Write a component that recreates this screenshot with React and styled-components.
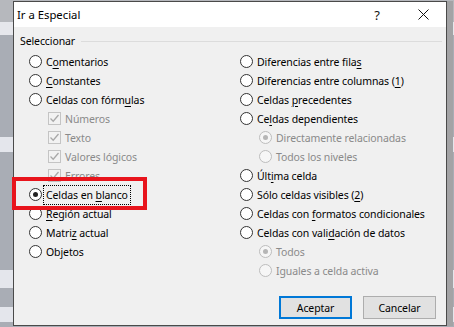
import React from "react";
import styled, { createGlobalStyle } from "styled-components";

const GlobalStyle = createGlobalStyle`
  html, body {
    margin: 0;
    padding: 0;
    width: 454px;
    height: 327px;
    overflow: hidden;
  }
  body {
    font-family: "Noto Sans", "Open Sans", sans-serif;
    background: linear-gradient(
      180deg,
      #b6b8bd 0px,
      #b6b8bd 22px,
      #e6e7ec 22px,
      #e6e7ec 35px,
      #a9adb5 35px,
      #a9adb5 137px,
      #e4e6ec 137px,
      #e4e6ec 152px,
      #a9adb5 152px,
      #a9adb5 270px,
      #e4e6ec 270px,
      #e4e6ec 288px,
      #a9adb5 288px,
      #a9adb5 307px,
      #e4e6ec 307px,
      #e4e6ec 322px,
      #a9adb5 322px
    );
  }
`;

const Screen = styled.div`
  position: relative;
  width: 454px;
  height: 327px;
  padding: 1px 0 0 13px;
  box-sizing: border-box;
`;

const Dialog = styled.div`
  width: 434px;
  height: 325px;
  box-sizing: border-box;
  border: 1px solid #4a4a4a;
  background: #f0f0f0;
  display: flex;
  flex-direction: column;
  box-shadow: 6px 0 0 #a3a3a5;
`;

const TitleBar = styled.div`
  height: 25px;
  background: #fff;
  display: flex;
  align-items: center;
  padding: 0 0 0 3px;
`;

const Title = styled.div`
  flex: 1;
  font-size: 11.3px;
  color: #000;
`;

const TitleButton = styled.div`
  width: 46px;
  height: 25px;
  display: flex;
  align-items: center;
  justify-content: center;
  font-size: 13px;
  color: #111;
`;

const Body = styled.div`
  flex: 1;
  display: flex;
  flex-direction: column;
  padding: 6px 4px 0 6px;
`;

const Legend = styled.div`
  display: flex;
  align-items: center;
  gap: 6px;
  height: 16px;
  font-size: 10.5px;
  letter-spacing: -0.1px;
  color: #000;

  &::after {
    content: "";
    flex: 1;
    height: 1px;
    background: #dcdcdc;
  }
`;

const Columns = styled.div`
  display: grid;
  grid-template-columns: 211px 1fr;
  padding-left: 9px;
  margin-top: 3px;
`;

const Column = styled.div`
  display: flex;
  flex-direction: column;
`;

const Row = styled.div`
  height: 19px;
  display: flex;
  align-items: center;
  padding-left: ${(p) => (p.$indent ? 19 : 0)}px;
  gap: 4px;
  font-size: 10.5px;
  letter-spacing: -0.1px;
  color: ${(p) => (p.$disabled ? "#8a8a8a" : "#000")};
`;

const RadioMark = styled.span`
  position: relative;
  width: 13px;
  height: 13px;
  box-sizing: border-box;
  border-radius: 50%;
  border: 1px solid ${(p) => (p.$disabled ? "#bdbdbd" : "#333")};
  background: ${(p) => (p.$disabled ? "#f6f6f6" : "#fff")};
  flex: none;

  &::after {
    content: "";
    display: ${(p) => (p.$checked ? "block" : "none")};
    position: absolute;
    left: 3px;
    top: 3px;
    width: 5px;
    height: 5px;
    border-radius: 50%;
    background: ${(p) => (p.$disabled ? "#b6b6b6" : "#222")};
  }
`;

const CheckMark = styled.span`
  width: 13px;
  height: 13px;
  box-sizing: border-box;
  border: 1px solid #c4c4c4;
  background: #f2f2f2;
  flex: none;
  display: flex;
  align-items: center;
  justify-content: center;
`;

const Label = styled.span`
  white-space: nowrap;
  outline: ${(p) => (p.$focus ? "1px dotted #000" : "none")};
  outline-offset: 2px;
  line-height: 14px;

  u {
    text-decoration-thickness: 1px;
    text-underline-offset: 2px;
  }
`;

const Footer = styled.div`
  display: flex;
  justify-content: flex-end;
  gap: 11px;
  margin-top: auto;
  padding: 0 6px 6px 0;
`;

const Button = styled.button`
  width: 73px;
  height: 23px;
  box-sizing: border-box;
  font-family: inherit;
  font-size: 10.5px;
  letter-spacing: -0.1px;
  color: #000;
  background: #e1e1e1;
  border: ${(p) => (p.$primary ? "2px solid #0078d7" : "1px solid #adadad")};
  padding: 0;
`;

const Highlight = styled.div`
  position: absolute;
  left: 12px;
  top: 177px;
  width: 135px;
  height: 33px;
  box-sizing: border-box;
  border: 4px solid #e8141c;
`;

const Check = () => (
  <svg width="11" height="11" viewBox="0 0 11 11">
    <path d="M1.5 5.5 L4.2 8.2 L9.5 2" fill="none" stroke="#a8a8a8" strokeWidth="1.3" />
  </svg>
);

const Close = () => (
  <svg width="11" height="11" viewBox="0 0 11 11">
    <path d="M0.5 0.5 L10.5 10.5 M10.5 0.5 L0.5 10.5" stroke="#111" strokeWidth="1" />
  </svg>
);

const Radio = ({ children, checked, disabled, indent, focus }) => (
  <Row $disabled={disabled} $indent={indent}>
    <RadioMark $checked={checked} $disabled={disabled} />
    <Label $focus={focus}>{children}</Label>
  </Row>
);

const Checkbox = ({ children }) => (
  <Row $disabled $indent>
    <CheckMark>
      <Check />
    </CheckMark>
    <Label>{children}</Label>
  </Row>
);

export default function App() {
  return (
    <Screen>
      <GlobalStyle />
      <Dialog>
        <TitleBar>
          <Title>Ir a Especial</Title>
          <TitleButton>?</TitleButton>
          <TitleButton>
            <Close />
          </TitleButton>
        </TitleBar>
        <Body>
          <Legend>Seleccionar</Legend>
          <Columns>
            <Column>
              <Radio>C<u>o</u>mentarios</Radio>
              <Radio><u>C</u>onstantes</Radio>
              <Radio>Celdas con fórm<u>u</u>las</Radio>
              <Checkbox>Números</Checkbox>
              <Checkbox>Texto</Checkbox>
              <Checkbox>Valores lógicos</Checkbox>
              <Checkbox>Errores</Checkbox>
              <Radio checked focus>Celdas en <u>b</u>lanco</Radio>
              <Radio><u>R</u>egión actual</Radio>
              <Radio>Matri<u>z</u> actual</Radio>
              <Radio>Ob<u>j</u>etos</Radio>
            </Column>
            <Column>
              <Radio>Diferencias entre fila<u>s</u></Radio>
              <Radio>Diferencias entre columnas (<u>1</u>)</Radio>
              <Radio>Celdas <u>p</u>recedentes</Radio>
              <Radio>Ce<u>l</u>das dependientes</Radio>
              <Radio indent disabled checked>Directamente relacionadas</Radio>
              <Radio indent disabled>Todos los niveles</Radio>
              <Radio>Últ<u>i</u>ma celda</Radio>
              <Radio>Sólo celdas visibles (<u>2</u>)</Radio>
              <Radio>Celdas con <u>f</u>ormatos condicionales</Radio>
              <Radio>Celdas con vali<u>d</u>ación de datos</Radio>
              <Radio indent disabled checked>Todos</Radio>
              <Radio indent disabled>Iguales a celda activa</Radio>
            </Column>
          </Columns>
          <Footer>
            <Button $primary>Aceptar</Button>
            <Button>Cancelar</Button>
          </Footer>
        </Body>
      </Dialog>
      <Highlight />
    </Screen>
  );
}
